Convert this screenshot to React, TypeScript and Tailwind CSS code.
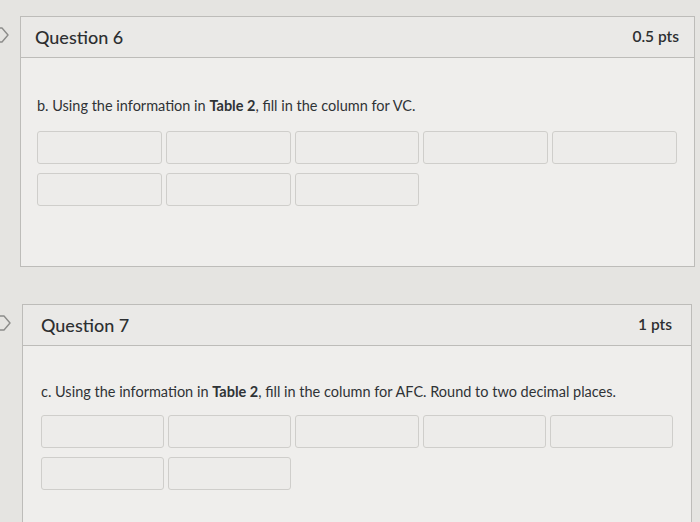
import React from 'react';

type QuestionProps = {
  number: number;
  points: string;
  prompt: React.ReactNode;
  rows: number[];
  className: string;
  headerClass: string;
  bodyClass: string;
  gridClass: string;
};

const Chevron = () => (
  <svg width="12" height="18" viewBox="0 0 12 18" className="shrink-0">
    <path d="M-4 2 L4 2 L10 9 L4 16 L-4 16" fill="none" stroke="#8c8c8a" strokeWidth="1.4" strokeLinejoin="round" />
  </svg>
);

const Question: React.FC<QuestionProps> = ({ number, points, prompt, rows, className, headerClass, bodyClass, gridClass }) => (
  <div className={`relative ${className}`}>
    <div className="absolute -left-[22px] top-[10px]">
      <Chevron />
    </div>
    <div className="border border-[#bdbcb9] bg-[#efeeec]">
      <div className={`flex h-[41px] items-center justify-between border-b border-[#bdbcb9] bg-[#eae9e7] ${headerClass}`}>
        <h2 className="text-[18px] font-medium text-[#2d2f31]">Question {number}</h2>
        <span className="text-[15.5px] font-semibold text-[#2d2f31]">{points}</span>
      </div>
      <div className={bodyClass}>
        <p className="text-[14.5px] text-[#2f3336]">{prompt}</p>
        <div className={`flex flex-col gap-[9px] ${gridClass}`}>
          {rows.map((count, r) => (
            <div key={r} className="grid grid-cols-5 gap-[4px]">
              {Array.from({ length: count }).map((_, i) => (
                <input
                  key={i}
                  className="h-[33px] rounded-[3px] border border-[#cfcecb] bg-[#edecea]"
                  aria-label={`Answer ${r + 1}-${i + 1}`}
                />
              ))}
            </div>
          ))}
        </div>
      </div>
    </div>
  </div>
);

export default function App() {
  return (
    <div className="h-[522px] w-[700px] overflow-hidden bg-[#e5e4e1] pt-[16px]" style={{ fontFamily: 'Lato, "Open Sans", sans-serif' }}>
      <Question
        number={6}
        points="0.5 pts"
        className="ml-[20px] w-[675px]"
        headerClass="pl-[14px] pr-[15px]"
        bodyClass="h-[208px] pl-[16px] pr-[17px] pt-[37px]"
        gridClass="mt-[14px]"
        rows={[5, 3]}
        prompt={
          <>
            b. Using the information in <b className="font-bold">Table 2</b>, fill in the column for VC.
          </>
        }
      />
      <div className="h-[37px]" />
      <Question
        number={7}
        points="1 pts"
        className="ml-[22px] w-[670px]"
        headerClass="pl-[18px] pr-[19px]"
        bodyClass="h-[200px] px-[18px] pt-[35px]"
        gridClass="mt-[12px]"
        rows={[5, 2]}
        prompt={
          <>
            c. Using the information in <b className="font-bold">Table 2</b>, fill in the column for AFC. Round to two decimal places.
          </>
        }
      />
    </div>
  );
}
